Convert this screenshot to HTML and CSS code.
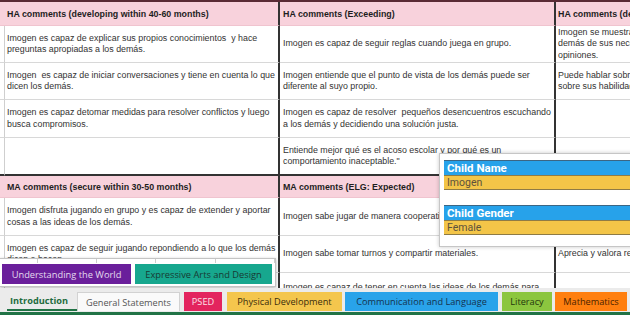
FILE: index.html
```html
<!DOCTYPE html>
<html lang="es">
<head>
<meta charset="utf-8">
<title>EYFS comments</title>
<link rel="stylesheet" href="styles.css">
</head>
<body>
<div class="app">
  <div class="sheet-wrap">
    <div class="sheet">
      <div class="cell head c1">HA comments (developing within 40-60 months)</div>
      <div class="cell head c2">HA comments (Exceeding)</div>
      <div class="cell head c3">HA comments (developing within 40-60 months)</div>

      <div class="cell idx"></div>
      <div class="cell c1">Imogen es capaz de explicar sus propios conocimientos&nbsp; y hace preguntas apropiadas a los demás.</div>
      <div class="cell c2">Imogen es capaz de seguir reglas cuando juega en grupo.</div>
      <div class="cell c3">Imogen se muestra segura al hablar con los<br>demás de sus necesidades, deseos, intereses y<br>opiniones.</div>

      <div class="cell idx"></div>
      <div class="cell c1">Imogen&nbsp; es capaz de iniciar conversaciones y tiene en cuenta lo que dicen los demás.</div>
      <div class="cell c2">Imogen entiende que el punto de vista de los demás puede ser diferente al suyo propio.</div>
      <div class="cell c3">Puede hablar sobre sí misma de forma positiva y<br>sobre sus habilidades.</div>

      <div class="cell idx"></div>
      <div class="cell c1">Imogen es capaz detomar medidas para resolver conflictos y luego busca compromisos.</div>
      <div class="cell c2">Imogen es capaz de resolver&nbsp; pequeños desencuentros escuchando a los demás y decidiendo una solución justa.</div>
      <div class="cell c3"></div>

      <div class="cell idx sep"></div>
      <div class="cell c1 sep"></div>
      <div class="cell c2 sep">Entiende mejor qué es el acoso escolar y por qué es un comportamiento inaceptable."</div>
      <div class="cell c3 sep"></div>

      <div class="cell head c1">MA comments (secure within 30-50 months)</div>
      <div class="cell head c2">MA comments (ELG: Expected)</div>
      <div class="cell head c3">MA comments (developing within 40-60 months)</div>

      <div class="cell idx"></div>
      <div class="cell c1">Imogen disfruta jugando en grupo y es capaz de extender y aportar cosas a las ideas de los demás.</div>
      <div class="cell c2">Imogen sabe jugar de manera cooperativa con los demás.</div>
      <div class="cell c3">Imogen se relaciona bien con adultos y niños.</div>

      <div class="cell idx"></div>
      <div class="cell c1">Imogen es capaz de seguir jugando repondiendo a lo que los demás dicen o hacen.</div>
      <div class="cell c2">Imogen sabe tomar turnos y compartir materiales.</div>
      <div class="cell c3">Aprecia y valora respetuosamente a los demás.</div>

      <div class="cell idx last"></div>
      <div class="cell c1 last"></div>
      <div class="cell c2 last top">Imogen es capaz de tener en cuenta las ideas de los demás para organizar una actividad.</div>
      <div class="cell c3 last"></div>
    </div>

    <div class="card">
      <div class="field">
        <div class="field-label">Child Name</div>
        <div class="field-value">Imogen</div>
      </div>
      <div class="field">
        <div class="field-label">Child Gender</div>
        <div class="field-value">Female</div>
      </div>
    </div>

    <div class="ribbon">
      <div class="ribbon-cells"><span class="rc-first"></span><span></span><span></span><span></span><span></span></div>
      <div class="ribbon-btns">
        <div class="rbtn rbtn-world">Understanding the World</div>
        <div class="rbtn rbtn-arts">Expressive Arts and Design</div>
      </div>
    </div>
  </div>

  <div class="tabs">
    <div class="tab tab-intro">Introduction</div>
    <div class="tab tab-general">General Statements</div>
    <div class="tab tab-psed">PSED</div>
    <div class="tab tab-phys">Physical Development</div>
    <div class="tab tab-comm">Communication and Language</div>
    <div class="tab tab-lit">Literacy</div>
    <div class="tab tab-math">Mathematics</div>
    <div class="tab tab-next"></div>
  </div>
</div>
</body>
</html>
```
FILE: styles.css
```css
* { box-sizing: border-box; margin: 0; padding: 0; }
html, body { width: 630px; height: 315px; overflow: hidden; }
body { font-family: "Liberation Sans", Arial, sans-serif; background: #fff; color: #333; }

.app { position: relative; width: 630px; height: 315px; display: flex; flex-direction: column; }

.sheet-wrap { position: relative; height: 288px; flex: none; overflow: hidden; }

.sheet {
  display: grid;
  grid-template-columns: 5px 275px 276px 276px;
  grid-template-rows: 24px 37px 37px 38px 38px 22px 38px 37px 15px;
  width: 832px;
  border-top: 2px solid #5a2b35;
  font-size: 8.85px;
  line-height: 11.5px;
}

.cell {
  display: flex;
  align-items: center;
  border-bottom: 1px solid #d8d8d8;
  overflow: hidden;
}
.cell.last { border-bottom: none; }
.cell.top { align-items: flex-start; padding-top: 9px; }
.idx { border-right: 1px solid #cfcfcf; }
.c1 { padding-left: 2px; border-right: 2px solid #333; }
.c2 { padding-left: 3px; border-right: 2px solid #333; }
.c3 { padding-left: 2px; white-space: nowrap; }

.head {
  background: #f8d2dc;
  font-weight: bold;
  color: #1e1e1e;
  border-bottom: 1px solid #f0c4cf;
  padding-top: 2px;
}
.head.c1 { grid-column: span 2; padding-left: 7px; }

.sep { border-bottom: 2px solid #333; }

/* floating info card */
.card {
  position: absolute;
  left: 439px;
  top: 153px;
  width: 200px;
  height: 94px;
  background: #fff;
  border: 1px solid #c6c6c6;
  box-shadow: 0 0 4px rgba(0, 0, 0, 0.22);
  padding: 6px 0 0 4px;
  display: flex;
  flex-direction: column;
  gap: 15px;
  font-family: Roboto, "Liberation Sans", sans-serif;
}
.field { display: flex; flex-direction: column; }
.field-label {
  height: 15px;
  background: #27a2ea;
  border-top: 1px solid #3c6684;
  color: #fff;
  font-weight: bold;
  font-size: 11.5px;
  padding-left: 3px;
  display: flex;
  align-items: center;
}
.field-value {
  height: 15px;
  background: #f3c548;
  border-top: 1px solid #8e7b45;
  border-bottom: 1px solid #8e7b45;
  color: #5d523c;
  font-size: 10.5px;
  padding-left: 3px;
  display: flex;
  align-items: center;
}

/* floating ribbon of section buttons */
.ribbon {
  position: absolute;
  left: 0;
  top: 258px;
  width: 276px;
  height: 29px;
  background: #fff;
  border: 1px solid #c4c4c4;
  border-left: none;
  box-shadow: 0 1px 3px rgba(0, 0, 0, 0.3);
  display: flex;
  flex-direction: column;
}
.ribbon-cells { height: 4px; display: flex; }
.ribbon-cells span { width: 60px; border-right: 1px solid #cdcdcd; }
.ribbon-cells .rc-first { width: 38px; }
.ribbon-btns { display: flex; gap: 4px; padding: 1px 2px 0 2px; }
.rbtn {
  height: 20px;
  display: flex;
  align-items: center;
  justify-content: center;
  font-family: "Open Sans", sans-serif;
  font-size: 9.3px;
}
.rbtn-world { width: 129px; background: #6a1f9b; color: #e4dbee; }
.rbtn-arts { width: 137px; background: #17a78e; color: #183a33; }

/* sheet tabs */
.tabs {
  height: 27px;
  flex: none;
  display: flex;
  align-items: flex-end;
  background: #ebebeb;
  border-bottom: 3px solid #217346;
  padding-bottom: 1px;
  font-family: "Open Sans", sans-serif;
  font-size: 9.2px;
}
.tab {
  height: 19px;
  flex: none;
  display: flex;
  align-items: center;
  justify-content: center;
  color: #2b2b2b;
}
.tab-intro {
  width: 70px;
  margin-left: 7px;
  padding-right: 6px;
  color: #1e6b3e;
  font-weight: bold;
  border-bottom: 2px solid #217346;
}
.tab-general { width: 103px; background: #fafafa; border: 1px solid #d2d2d2; border-bottom: none; color: #555; }
.tab-psed { width: 38px; margin-left: 4px; background: #e3245e; color: #fbe3ea; }
.tab-phys { width: 115px; margin-left: 5px; background: #f4c64d; color: #3a2d0c; }
.tab-comm { width: 153px; margin-left: 3px; background: #29a3ea; color: #15324d; }
.tab-lit { width: 50px; margin-left: 4px; background: #8cc63f; color: #24360d; }
.tab-math { width: 72px; margin-left: 3px; background: #ff7f0f; color: #4a1f00; }
.tab-next { width: 20px; margin-left: 3px; background: #d0d0d0; }
```
